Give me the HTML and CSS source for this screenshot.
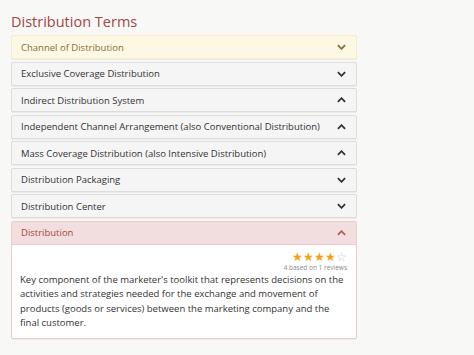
FILE: index.html
```html
<!DOCTYPE html>
<html lang="en">

<head>
    <meta charset="UTF-8">
    <meta name="viewport" content="width=device-width, initial-scale=1.0">
    <title>Distribution Terms</title>
    <link rel="stylesheet" href="styles.css">
</head>

<body>
    <div class="terms">
        <h1 class="terms-title">Distribution Terms</h1>

        <div class="panel panel-warning">
            <div class="panel-heading">
                <span>Channel of Distribution</span>
                <svg class="chevron" viewBox="0 0 10 6"><polyline points="1,1 5,5 9,1" /></svg>
            </div>
        </div>

        <div class="panel">
            <div class="panel-heading">
                <span>Exclusive Coverage Distribution</span>
                <svg class="chevron" viewBox="0 0 10 6"><polyline points="1,1 5,5 9,1" /></svg>
            </div>
        </div>

        <div class="panel">
            <div class="panel-heading">
                <span>Indirect Distribution System</span>
                <svg class="chevron" viewBox="0 0 10 6"><polyline points="1,5 5,1 9,5" /></svg>
            </div>
        </div>

        <div class="panel">
            <div class="panel-heading">
                <span>Independent Channel Arrangement (also Conventional Distribution)</span>
                <svg class="chevron" viewBox="0 0 10 6"><polyline points="1,5 5,1 9,5" /></svg>
            </div>
        </div>

        <div class="panel">
            <div class="panel-heading">
                <span>Mass Coverage Distribution (also Intensive Distribution)</span>
                <svg class="chevron" viewBox="0 0 10 6"><polyline points="1,5 5,1 9,5" /></svg>
            </div>
        </div>

        <div class="panel">
            <div class="panel-heading">
                <span>Distribution Packaging</span>
                <svg class="chevron" viewBox="0 0 10 6"><polyline points="1,1 5,5 9,1" /></svg>
            </div>
        </div>

        <div class="panel">
            <div class="panel-heading">
                <span>Distribution Center</span>
                <svg class="chevron" viewBox="0 0 10 6"><polyline points="1,1 5,5 9,1" /></svg>
            </div>
        </div>

        <div class="panel panel-danger">
            <div class="panel-heading">
                <span>Distribution</span>
                <svg class="chevron" viewBox="0 0 10 6"><polyline points="1,5 5,1 9,5" /></svg>
            </div>
            <div class="panel-body">
                <div class="rating">
                    <div class="stars">
                        <span class="star on">★</span><span class="star on">★</span><span class="star on">★</span><span class="star on">★</span><span class="star">☆</span>
                    </div>
                    <div class="rating-count">4 based on 1 reviews</div>
                </div>
                <p>Key component of the marketer's toolkit that represents decisions on the activities and strategies needed for the exchange and movement of products (goods or services) between the marketing company and the final customer.</p>
            </div>
        </div>
    </div>
</body>

</html>
```

FILE: styles.css
```css
* {
    margin: 0;
    padding: 0;
    box-sizing: border-box;
    font-family: 'Open Sans', 'Noto Sans', sans-serif;
}

body {
    background-color: #f8f8f7;
    color: #333333;
    height: 100vh;
    overflow: hidden;
}

.terms {
    width: 346px;
    margin-left: 11px;
    padding-top: 12px;
}

.terms-title {
    font-size: 14.5px;
    font-weight: 400;
    color: #a94442;
    line-height: 20px;
    margin-bottom: 3px;
}

.panel {
    background: #f5f5f5;
    border: 1px solid #dddddd;
    border-radius: 2px;
    box-shadow: 0 1px 1px rgba(0, 0, 0, 0.06);
    margin-bottom: 2.5px;
}

.panel-heading {
    height: 22px;
    padding: 0 8px 0 9px;
    display: flex;
    align-items: center;
    justify-content: space-between;
    font-size: 9.5px;
}

.chevron {
    width: 9px;
    height: 6px;
    fill: none;
    stroke: #333333;
    stroke-width: 2;
    margin-right: 2px;
}

.panel-warning {
    background: #fcf8e3;
    border-color: #faebcc;
}

.panel-warning .panel-heading {
    color: #8a6d3b;
}

.panel-warning .chevron {
    stroke: #8a6d3b;
}

.panel-danger {
    border-color: #ebccd1;
    background: #ffffff;
}

.panel-danger .panel-heading {
    background: #f2dede;
    color: #a94442;
}

.panel-danger .chevron {
    stroke: #b35a5a;
}

.panel-body {
    padding: 6px 9px 7px 8px;
    border-top: 1px solid #ebccd1;
}

.rating {
    display: flex;
    flex-direction: column;
    align-items: flex-end;
    margin-bottom: 1px;
}

.stars {
    font-size: 11.5px;
    line-height: 12px;
    font-family: 'DejaVu Sans', sans-serif;
}

.star {
    color: #c8c8c8;
}

.star.on {
    color: #f5a00f;
}

.rating-count {
    font-size: 6.5px;
    color: #888888;
    line-height: 9px;
}

.panel-body p {
    font-size: 9.5px;
    line-height: 14.5px;
    color: #333333;
}
```
